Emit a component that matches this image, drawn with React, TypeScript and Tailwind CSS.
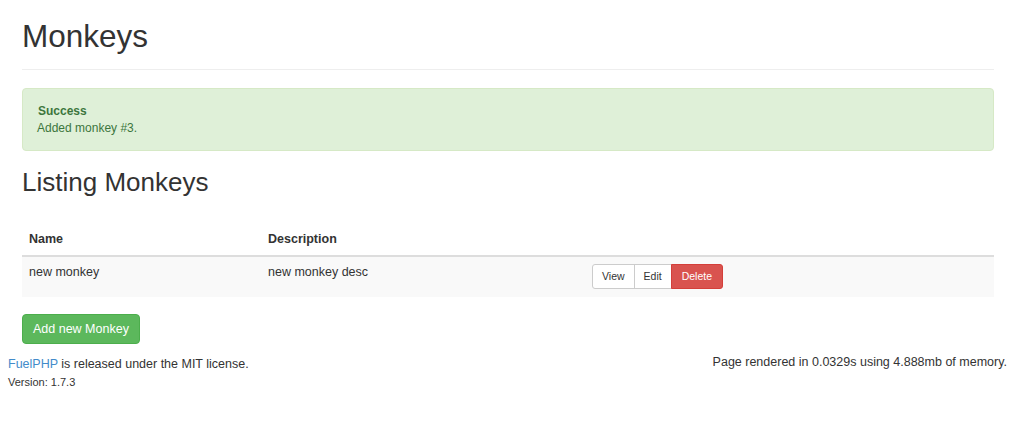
import React from "react"

type Monkey = {
  id: number
  name: string
  description: string
}

const monkeys: Monkey[] = [{ id: 3, name: "new monkey", description: "new monkey desc" }]

function ActionGroup() {
  return (
    <div className="inline-flex">
      <a className="h-[25px] px-[9px] border border-[#ccc] bg-white text-[#333] text-[10.5px] leading-[23px] rounded-l-[3px]">
        View
      </a>
      <a className="h-[25px] px-[9px] -ml-px border border-[#ccc] bg-white text-[#333] text-[10.5px] leading-[23px]">
        Edit
      </a>
      <a className="h-[25px] px-[10px] -ml-px border border-[#d43f3a] bg-[#d9534f] text-white text-[10.5px] leading-[23px] rounded-r-[3px]">
        Delete
      </a>
    </div>
  )
}

export default function App() {
  return (
    <div className="min-h-[439px] bg-white text-[#333] text-[12.5px] leading-[17px] font-['Liberation_Sans',Arial,sans-serif]">
      <div className="ml-[22px] w-[972px] pt-[19px]">
        <h1 className="text-[31.5px] leading-[34px] font-normal">Monkeys</h1>
        <hr className="mt-[16px] border-0 border-t border-[#eee]" />

        <div className="mt-[18px] rounded-[4px] border border-[#d6e9c6] bg-[#dff0d8] px-[14px] pt-[14px] pb-[13px] text-[12px] text-[#3c763d]">
          <strong className="block pl-px font-bold">Success</strong>
          <p>Added monkey #{monkeys[0].id}.</p>
        </div>

        <h2 className="mt-[17px] text-[26px] leading-[29px] font-normal">Listing Monkeys</h2>

        <table className="mt-[27px] w-full border-collapse">
          <thead>
            <tr>
              <th className="w-[239px] px-[7px] pt-[7px] pb-[7px] text-left font-bold border-b-2 border-[#ddd]">Name</th>
              <th className="w-[324px] px-[7px] pt-[7px] pb-[7px] text-left font-bold border-b-2 border-[#ddd]">
                Description
              </th>
              <th className="px-[7px] pt-[7px] pb-[7px] border-b-2 border-[#ddd]"></th>
            </tr>
          </thead>
          <tbody>
            {monkeys.map((m) => (
              <tr key={m.id} className="bg-[#f9f9f9]">
                <td className="h-[41px] px-[7px] pt-[7px] align-top">{m.name}</td>
                <td className="h-[41px] px-[7px] pt-[7px] align-top">{m.description}</td>
                <td className="h-[41px] px-[7px] pt-[7px] align-top">
                  <ActionGroup />
                </td>
              </tr>
            ))}
          </tbody>
        </table>

        <a className="mt-[17px] inline-block h-[30px] rounded-[4px] border border-[#4cae4c] bg-[#5cb85c] px-[10px] leading-[28px] text-white">
          Add new Monkey
        </a>
      </div>

      <footer className="mt-[12px] pl-[8px] pr-[17px]">
        <div className="flex justify-between">
          <p>
            <a className="text-[#428bca]">FuelPHP</a> is released under the MIT license.
          </p>
          <p className="-mt-[2px]">Page rendered in 0.0329s using 4.888mb of memory.</p>
        </div>
        <p className="mt-[2px] text-[11px] leading-[15px]">Version: 1.7.3</p>
      </footer>
    </div>
  )
}
